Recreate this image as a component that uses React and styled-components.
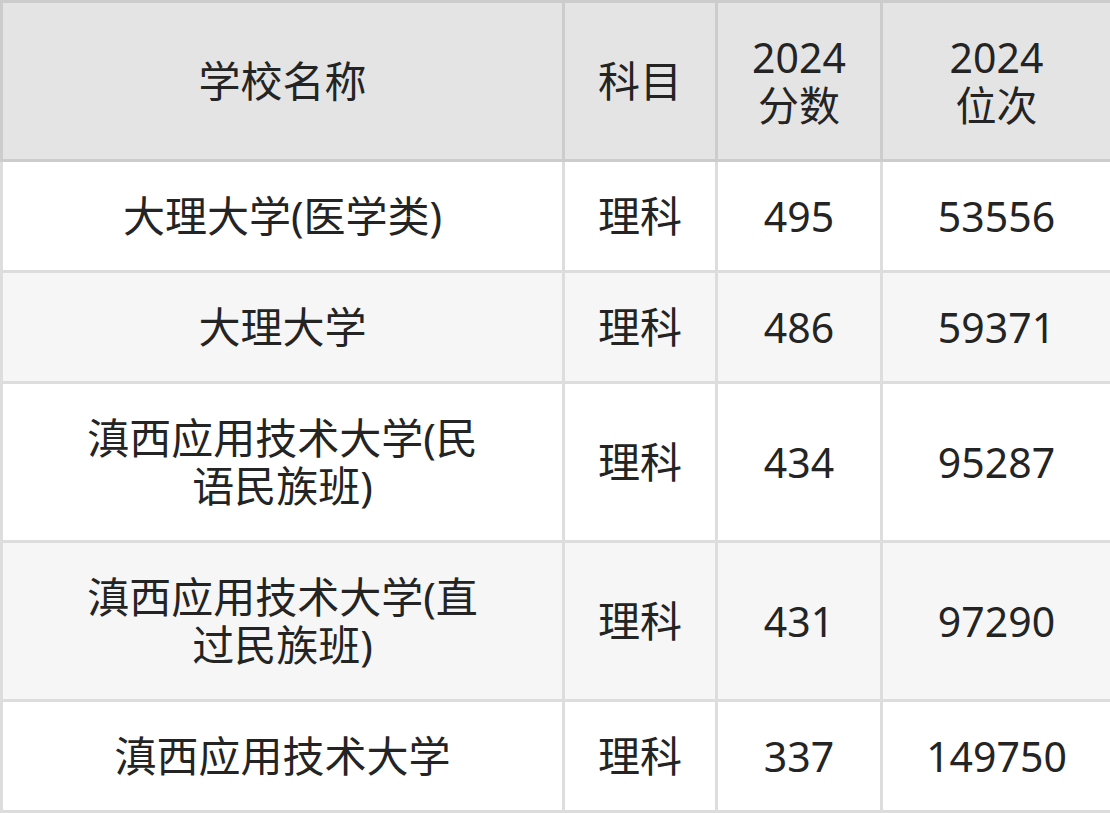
import React from "react";
import styled, { createGlobalStyle } from "styled-components";

const Global = createGlobalStyle`
  html, body {
    margin: 0;
    padding: 0;
    background: #ffffff;
    overflow: hidden;
  }
  body {
    font-family: "Noto Sans", "Noto Sans CJK SC", sans-serif;
  }
`;

const Table = styled.table`
  width: 1113px;
  table-layout: fixed;
  border-collapse: separate;
  border-spacing: 0;
  font-family: "Noto Sans", "Noto Sans CJK SC", sans-serif;
  line-height: 48px;
  color: #242424;
`;

const HeadCell = styled.th`
  background: #e4e4e4;
  font-weight: 400;
  font-size: ${(p) => p.$fs || 42}px;
  text-align: center;
  vertical-align: middle;
  padding: 30px ${(p) => p.$px || 8}px;
  border-top: 3px solid #cccccc;
  border-right: 3px solid #cccccc;
  border-bottom: 3px solid #cccccc;
  border-left: ${(p) => (p.$first ? "3px solid #cccccc" : "none")};
`;

const Row = styled.tr`
  background: ${(p) => (p.$alt ? "#f6f6f6" : "#ffffff")};
`;

const Cell = styled.td`
  font-size: ${(p) => p.$fs || 42}px;
  text-align: center;
  vertical-align: middle;
  padding: 30px ${(p) => p.$px || 8}px;
  border-right: 3px solid #dddddd;
  border-bottom: 3px solid #dddddd;
  border-left: ${(p) => (p.$first ? "3px solid #dddddd" : "none")};
`;

const rows = [
  ["大理大学(医学类)", "理科", "495", "53556"],
  ["大理大学", "理科", "486", "59371"],
  ["滇西应用技术大学(民语民族班)", "理科", "434", "95287"],
  ["滇西应用技术大学(直过民族班)", "理科", "431", "97290"],
  ["滇西应用技术大学", "理科", "337", "149750"],
];

export default function App() {
  return (
    <>
      <Global />
      <Table>
        <colgroup>
          <col style={{ width: 565 }} />
          <col style={{ width: 153 }} />
          <col style={{ width: 165 }} />
          <col style={{ width: 230 }} />
        </colgroup>
        <thead>
          <tr>
            <HeadCell $first $px={76}>学校名称</HeadCell>
            <HeadCell>科目</HeadCell>
            <HeadCell $fs={41}>
              2024
              <br />
              分数
            </HeadCell>
            <HeadCell $fs={41}>
              2024
              <br />
              位次
            </HeadCell>
          </tr>
        </thead>
        <tbody>
          {rows.map((r, i) => (
            <Row key={i} $alt={i % 2 === 1}>
              <Cell $first $px={76}>{r[0]}</Cell>
              <Cell>{r[1]}</Cell>
              <Cell $fs={41}>{r[2]}</Cell>
              <Cell $fs={41}>{r[3]}</Cell>
            </Row>
          ))}
        </tbody>
      </Table>
    </>
  );
}
